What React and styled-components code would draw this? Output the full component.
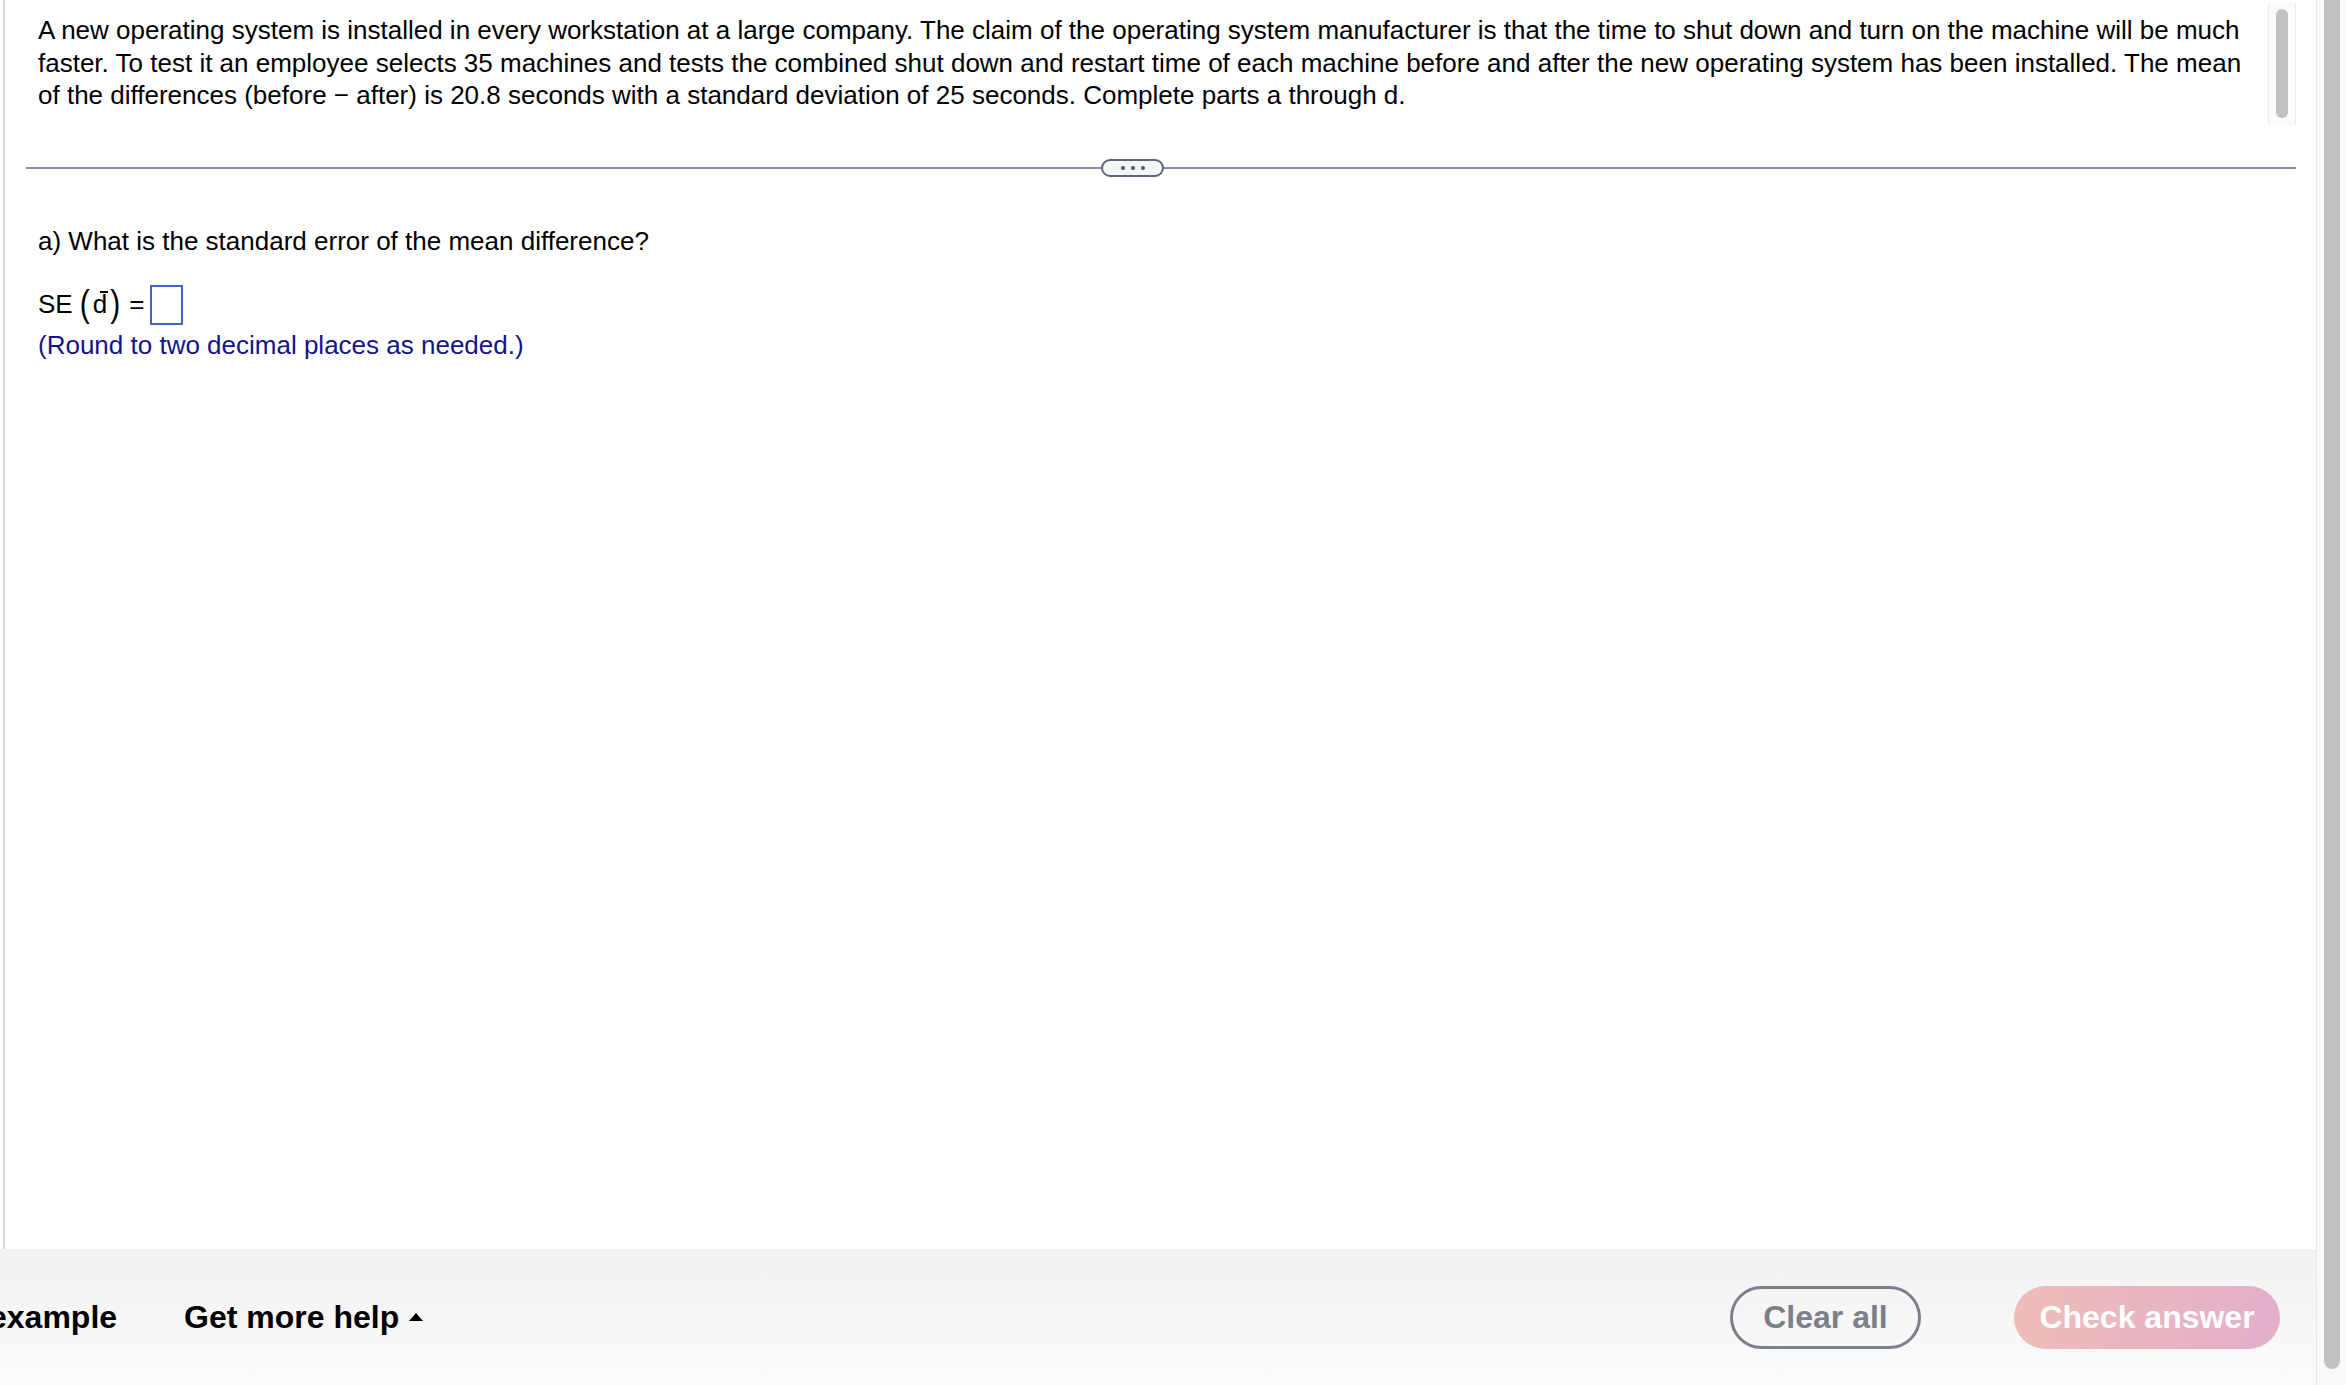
import React from 'react'
import styled, { createGlobalStyle } from 'styled-components'

const GlobalStyle = createGlobalStyle`
    html, body {
        margin: 0;
        padding: 0;
        overflow: hidden;
        background: #fff;
    }
    body {
        font-family: "Liberation Sans", Arial, Helvetica, sans-serif;
        color: #000;
    }
`;

const Page = styled.div`
    display: flex;
    width: 2346px;
    height: 1385px;
`;

const Main = styled.div`
    flex: 1;
    min-width: 0;
    display: flex;
    flex-direction: column;
`;

const Workspace = styled.div`
    flex: 1;
    margin-left: 3px;
    border-left: 2px solid #d5d8e2;
    background: #fff;
    display: flex;
    flex-direction: column;
`;

const Stem = styled.div`
    display: flex;
    align-items: flex-start;
    padding-top: 3px;
    height: 122px;
`;

const StemText = styled.p`
    flex: 1;
    margin: 0;
    padding: 11px 4px 0 33px;
    font-size: 26px;
    line-height: 32.5px;
`;

const MiniTrack = styled.div`
    width: 28px;
    height: 122px;
    box-sizing: border-box;
    margin-right: 20px;
    padding: 6px 7px;
    background: #fafafa;
    border-left: 1px solid #ececec;
    border-right: 1px solid #ececec;
`;

const MiniThumb = styled.div`
    height: 109px;
    border-radius: 8px;
    background: #c1c1c1;
`;

const Divider = styled.div`
    display: grid;
    grid-template-columns: 1075px 63px 1fr;
    align-items: center;
    margin: 34px 20px 0 21px;
`;

const Rule = styled.div`
    height: 2px;
    background: #868e9c;
`;

const Pill = styled.button`
    height: 18px;
    box-sizing: border-box;
    border: 2px solid #5d6675;
    border-radius: 9px;
    background: #f4f5f7;
    display: flex;
    align-items: center;
    justify-content: center;
    gap: 6px;
    padding: 0;
`;

const Dot = styled.span`
    width: 4px;
    height: 4px;
    border-radius: 50%;
    background: #4e5664;
`;

const Part = styled.div`
    padding: 48px 0 0 33px;
    font-size: 26px;
    line-height: 32.5px;
`;

const Question = styled.p`
    margin: 0;
`;

const AnswerRow = styled.div`
    display: flex;
    align-items: center;
    height: 40px;
    margin-top: 27px;
`;

const Paren = styled.span`
    display: inline-block;
    font-size: 30px;
    font-weight: 300;
    transform: scaleY(1.25);
    margin: ${(p) => (p.$open ? '0 3px 0 7px' : '0 0 0 3px')};
`;

const Bar = styled.span`
    display: inline-block;
    position: relative;
    &::before {
        content: '';
        position: absolute;
        top: 3px;
        left: 7px;
        width: 8px;
        height: 2px;
        background: #000;
    }
`;

const Equals = styled.span`
    margin: 0 6px 0 9px;
`;

const AnswerBox = styled.span`
    display: inline-block;
    width: 33px;
    height: 40px;
    box-sizing: border-box;
    border: 2px solid #3f63c6;
`;

const Hint = styled.p`
    margin: 4px 0 0;
    color: #13138a;
`;

const BottomBar = styled.div`
    height: 136px;
    display: flex;
    align-items: center;
    padding: 0 36px 0 0;
    background: linear-gradient(#f2f2f2, #fbfbfb);
    font-size: 32px;
    font-weight: bold;
`;

const BarLink = styled.span`
    margin-left: ${(p) => p.$offset}px;
    display: flex;
    align-items: center;
    white-space: nowrap;
`;

const Caret = styled.span`
    width: 0;
    height: 0;
    margin-left: 10px;
    border-left: 7px solid transparent;
    border-right: 7px solid transparent;
    border-bottom: 8px solid #000;
`;

const PillButton = styled.button`
    height: 63px;
    box-sizing: border-box;
    border-radius: 32px;
    font-family: inherit;
    font-size: 32px;
    font-weight: bold;
    padding: 0;
    width: ${(p) => p.$width}px;
    margin-left: ${(p) => p.$gap};
    color: ${(p) => (p.$primary ? '#ffffff' : '#7c8089')};
    border: ${(p) => (p.$primary ? 'none' : '3px solid #7c808a')};
    background: ${(p) => (p.$primary ? 'linear-gradient(100deg, #efbdb8, #e2afcb)' : 'transparent')};
`;

const PageTrack = styled.div`
    width: 30px;
    flex-shrink: 0;
    box-sizing: border-box;
    border-left: 1px solid #e6e6e6;
    background: #fafafa;
    padding: 0 6px 0 7px;
`;

const PageThumb = styled.div`
    height: 1369px;
    border-radius: 0 0 8px 8px;
    background: #c1c1c1;
`;

export default function App() {
  return (
    <>
    <GlobalStyle />
    <Page>
      <Main>
        <Workspace>
          <Stem>
            <StemText>
              A new operating system is installed in every workstation at a large company. The claim of the operating system manufacturer is that the time to shut down and turn on the machine will be much faster. To test it an employee selects 35 machines and tests the combined shut down and restart time of each machine before and after the new operating system has been installed. The mean of the differences (before − after) is 20.8 seconds with a standard deviation of 25 seconds. Complete parts a through d.
            </StemText>
            <MiniTrack><MiniThumb /></MiniTrack>
          </Stem>
          <Divider>
            <Rule />
            <Pill aria-label="more"><Dot /><Dot /><Dot /></Pill>
            <Rule />
          </Divider>
          <Part>
            <Question>a) What is the standard error of the mean difference?</Question>
            <AnswerRow>
              SE<Paren $open>(</Paren><Bar>d</Bar><Paren>)</Paren>
              <Equals>=</Equals>
              <AnswerBox />
            </AnswerRow>
            <Hint>(Round to two decimal places as needed.)</Hint>
          </Part>
        </Workspace>
        <BottomBar>
          <BarLink $offset={-11}>example</BarLink>
          <BarLink $offset={67}>Get more help<Caret /></BarLink>
          <PillButton $width={191} $gap="auto">Clear all</PillButton>
          <PillButton $primary $width={266} $gap="93px">Check answer</PillButton>
        </BottomBar>
      </Main>
      <PageTrack><PageThumb /></PageTrack>
    </Page>
    </>
  )
}
